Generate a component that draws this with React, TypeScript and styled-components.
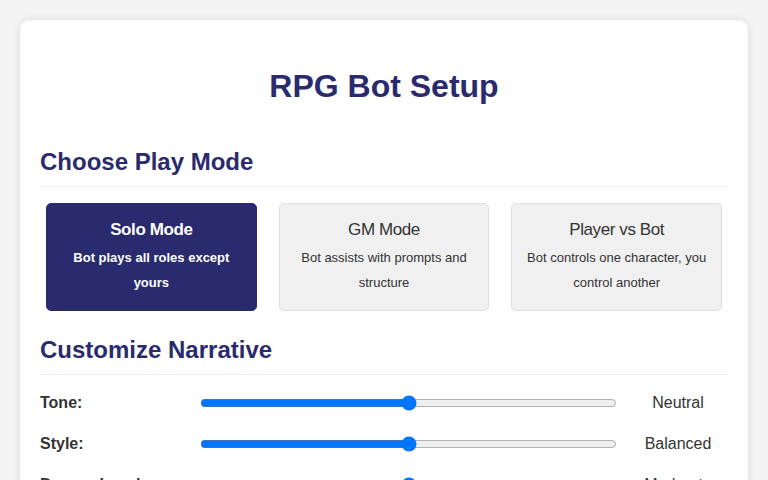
import React, { useState } from 'react';
import styled, { createGlobalStyle } from 'styled-components';

const GlobalStyle = createGlobalStyle`
  body {
    margin: 0;
    background: #f4f4f4;
    font-family: 'Liberation Sans', Arial, sans-serif;
    color: #333;
  }
`;

const Page = styled.div`
  padding: 20px;
`;

const Panel = styled.div`
  background: #fff;
  border-radius: 10px;
  box-shadow: 0 0 10px rgba(0, 0, 0, 0.1);
  padding: 20px 20px 30px;
`;

const Title = styled.h1`
  margin: 28px 0 0;
  font-size: 32px;
  line-height: 37px;
  font-weight: 700;
  text-align: center;
  color: #2a2a6e;
`;

const SectionTitle = styled.h2<{ $top: number }>`
  margin: ${(p) => p.$top}px 0 0;
  padding-bottom: 10px;
  border-bottom: 1px solid #eee;
  font-size: 24px;
  line-height: 28px;
  font-weight: 700;
  color: #2a2a6e;
`;

const ModeGrid = styled.div`
  display: flex;
  gap: 22px;
  padding: 0 6px;
  margin-top: 16px;
`;

const ModeCard = styled.div<{ $active: boolean }>`
  flex: 1;
  padding: 13px 14px 15px;
  border-radius: 5px;
  border: 1px solid ${(p) => (p.$active ? '#2a2a6e' : '#ddd')};
  background: ${(p) => (p.$active ? '#2a2a6e' : '#f0f0f0')};
  color: ${(p) => (p.$active ? '#fff' : '#333')};
  text-align: center;
  cursor: pointer;
`;

const ModeName = styled.h3<{ $active: boolean }>`
  margin: 0 0 2px;
  font-size: 17px;
  letter-spacing: -0.4px;
  line-height: 26px;
  font-weight: ${(p) => (p.$active ? 700 : 400)};
`;

const ModeDesc = styled.p<{ $active: boolean }>`
  margin: 0;
  font-size: 13px;
  line-height: 25px;
  font-weight: ${(p) => (p.$active ? 700 : 400)};
`;

const Controls = styled.div`
  margin-top: 7px;
`;

const Row = styled.div`
  display: flex;
  align-items: center;
  height: 41px;
`;

const Label = styled.label`
  width: 160px;
  flex-shrink: 0;
  font-size: 16px;
  font-weight: 700;
  color: #333;
`;

const Slider = styled.input`
  flex: 1;
  margin: 0;
  min-width: 0;
`;

const Value = styled.span`
  width: 100px;
  margin-left: 11px;
  flex-shrink: 0;
  text-align: center;
  font-size: 16px;
  color: #333;
`;

const modes = [
  { id: 'solo', name: 'Solo Mode', desc: 'Bot plays all roles except yours' },
  { id: 'gm', name: 'GM Mode', desc: 'Bot assists with prompts and structure' },
  { id: 'pvb', name: 'Player vs Bot', desc: 'Bot controls one character, you control another' },
];

const settings = [
  { id: 'tone', label: 'Tone:', values: ['Dark', 'Grim', 'Neutral', 'Light', 'Whimsical'] },
  { id: 'style', label: 'Style:', values: ['Combat', 'Action', 'Balanced', 'Story', 'Roleplay'] },
  { id: 'danger', label: 'Danger Level:', values: ['Safe', 'Low', 'Moderate', 'High', 'Deadly'] },
];

function App() {
  const [mode, setMode] = useState('solo');
  const [levels, setLevels] = useState<Record<string, number>>({ tone: 50, style: 50, danger: 50 });

  const word = (values: string[], v: number) => values[Math.min(values.length - 1, Math.floor(v / 20))];

  return (
    <Page>
      <GlobalStyle />
      <Panel>
        <Title>RPG Bot Setup</Title>

        <SectionTitle $top={43}>Choose Play Mode</SectionTitle>
        <ModeGrid>
          {modes.map((m) => (
            <ModeCard key={m.id} $active={mode === m.id} onClick={() => setMode(m.id)}>
              <ModeName $active={mode === m.id}>{m.name}</ModeName>
              <ModeDesc $active={mode === m.id}>{m.desc}</ModeDesc>
            </ModeCard>
          ))}
        </ModeGrid>

        <SectionTitle $top={25}>Customize Narrative</SectionTitle>
        <Controls>
          {settings.map((s) => (
            <Row key={s.id}>
              <Label htmlFor={s.id}>{s.label}</Label>
              <Slider
                id={s.id}
                type="range"
                min={0}
                max={100}
                value={levels[s.id]}
                onChange={(e) => setLevels({ ...levels, [s.id]: Number(e.target.value) })}
              />
              <Value>{word(s.values, levels[s.id])}</Value>
            </Row>
          ))}
        </Controls>
      </Panel>
    </Page>
  );
}

export default App;
